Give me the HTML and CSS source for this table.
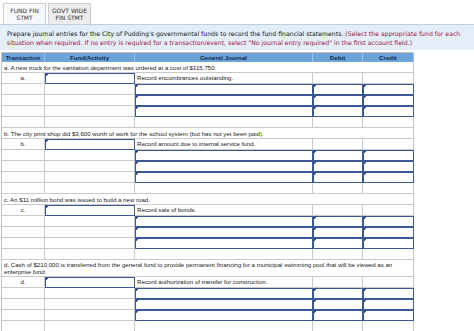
FILE: index.html
```html
<!DOCTYPE html>
<html>
<head>
<meta charset="utf-8">
<link rel="stylesheet" href="styles.css">
</head>
<body>
<div class="tabs">
  <div class="tab active">FUND FIN<br>STMT</div>
  <div class="tab">GOVT WIDE<br>FIN STMT</div>
</div>
<div class="prompt">
  Prepare journal entries for the City of Pudding's governmental funds to record the fund financial statements. <span class="hint">(Select the appropriate fund for each situation when required. If no entry is required for a transaction/event, select "No journal entry required" in the first account field.)</span>
</div>
<table class="journal">
  <colgroup>
    <col class="c1"><col class="c2"><col class="c3"><col class="c4"><col class="c5">
  </colgroup>
  <thead>
    <tr><th>Transaction</th><th>Fund/Activity</th><th>General Journal</th><th>Debit</th><th>Credit</th></tr>
  </thead>
  <tbody>
    <tr><td class="desc" colspan="5">a. A new truck for the sanitation department was ordered at a cost of $115,750.</td></tr>
    <tr><td class="ltr">a.</td><td class="in"></td><td class="txt">Record encumbrances outstanding.</td><td></td><td></td></tr>
    <tr><td></td><td></td><td class="in"></td><td class="in"></td><td class="in"></td></tr>
    <tr><td></td><td></td><td class="in"></td><td class="in"></td><td class="in"></td></tr>
    <tr><td></td><td></td><td class="in"></td><td class="in"></td><td class="in"></td></tr>
    <tr><td></td><td></td><td></td><td></td><td></td></tr>

    <tr><td class="desc" colspan="5">b. The city print shop did $3,600 worth of work for the school system (but has not yet been paid).</td></tr>
    <tr><td class="ltr">b.</td><td class="in"></td><td class="txt">Record amount due to internal service fund.</td><td></td><td></td></tr>
    <tr><td></td><td></td><td class="in"></td><td class="in"></td><td class="in"></td></tr>
    <tr><td></td><td></td><td class="in"></td><td class="in"></td><td class="in"></td></tr>
    <tr><td></td><td></td><td class="in"></td><td class="in"></td><td class="in"></td></tr>
    <tr><td></td><td></td><td></td><td></td><td></td></tr>

    <tr><td class="desc" colspan="5">c. An $11 million bond was issued to build a new road.</td></tr>
    <tr><td class="ltr">c.</td><td class="in"></td><td class="txt">Record sale of bonds.</td><td></td><td></td></tr>
    <tr><td></td><td></td><td class="in"></td><td class="in"></td><td class="in"></td></tr>
    <tr><td></td><td></td><td class="in"></td><td class="in"></td><td class="in"></td></tr>
    <tr><td></td><td></td><td class="in"></td><td class="in"></td><td class="in"></td></tr>
    <tr><td></td><td></td><td></td><td></td><td></td></tr>

    <tr><td class="desc" colspan="5">d. Cash of $210,000 is transferred from the general fund to provide permanent financing for a municipal swimming pool that will be viewed as an enterprise fund.</td></tr>
    <tr><td class="ltr">d.</td><td class="in"></td><td class="txt">Record authorization of transfer for construction.</td><td></td><td></td></tr>
    <tr><td></td><td></td><td class="in"></td><td class="in"></td><td class="in"></td></tr>
    <tr><td></td><td></td><td class="in"></td><td class="in"></td><td class="in"></td></tr>
    <tr><td></td><td></td><td class="in"></td><td class="in"></td><td class="in"></td></tr>
    <tr><td></td><td></td><td></td><td></td><td></td></tr>
  </tbody>
</table>
</body>
</html>
```
FILE: styles.css
```css
html, body {
  margin: 0;
  padding: 0;
  background: #ffffff;
}

.tabs {
  display: flex;
  gap: 2px;
  padding: 3px 0 0 3px;
}

.tab {
  box-sizing: border-box;
  width: 43px;
  height: 21px;
  border: 1px solid #cfcfcf;
  border-bottom: none;
  background: #ececec;
  color: #333333;
  font-family: "DejaVu Sans", Verdana, sans-serif;
  font-size: 6px;
  line-height: 7.5px;
  text-align: center;
  display: flex;
  align-items: center;
  justify-content: center;
}

.tab.active {
  background: #f6f9fc;
}

.prompt {
  box-sizing: border-box;
  height: 26px;
  background: #e3eef8;
  border-top: 1px solid #bcd0e2;
  padding: 4px 7px 0;
  font-family: "DejaVu Sans", Verdana, sans-serif;
  font-size: 6.2px;
  line-height: 9px;
  color: #111111;
}

.hint {
  color: #a2103f;
}

.journal {
  margin: 2px 0 0 1px;
  border-collapse: separate;
  border-spacing: 0;
  table-layout: fixed;
  width: 412px;
  border-left: 1px solid #c4c4c4;
  border-top: 1px solid #c4c4c4;
  font-family: "Liberation Sans", Arial, sans-serif;
  font-size: 6.1px;
  color: #222222;
}

.c1 { width: 43px; }
.c2 { width: 90px; }
.c3 { width: 178px; }
.c4 { width: 50px; }
.c5 { width: 51px; }

.journal th {
  box-sizing: border-box;
  height: 9px;
  padding: 0;
  background: #6ca4da;
  color: #13284a;
  font-weight: bold;
  font-size: 6.2px;
  line-height: 9px;
  text-align: center;
  border-right: 1px solid #9cc2e8;
}

.journal td {
  box-sizing: border-box;
  height: 11px;
  padding: 0 2px;
  line-height: 10px;
  border-right: 1px solid #cacaca;
  border-bottom: 1px solid #cacaca;
  white-space: nowrap;
  overflow: hidden;
  vertical-align: middle;
}

.journal td.desc {
  white-space: normal;
  line-height: 7px;
  padding: 1px 2px 1px;
}

.journal td.ltr {
  text-align: center;
}

.journal td.txt {
  padding-left: 2px;
}

.journal td.in {
  border-right-color: #3a5894;
  border-bottom-color: #3a5894;
  box-shadow: inset 1px 1px 0 #3a5894;
  background-image: linear-gradient(to bottom right, #2f4d8c 50%, transparent 50%);
  background-size: 2px 3px;
  background-position: 1px 1px;
  background-repeat: no-repeat;
}
```
